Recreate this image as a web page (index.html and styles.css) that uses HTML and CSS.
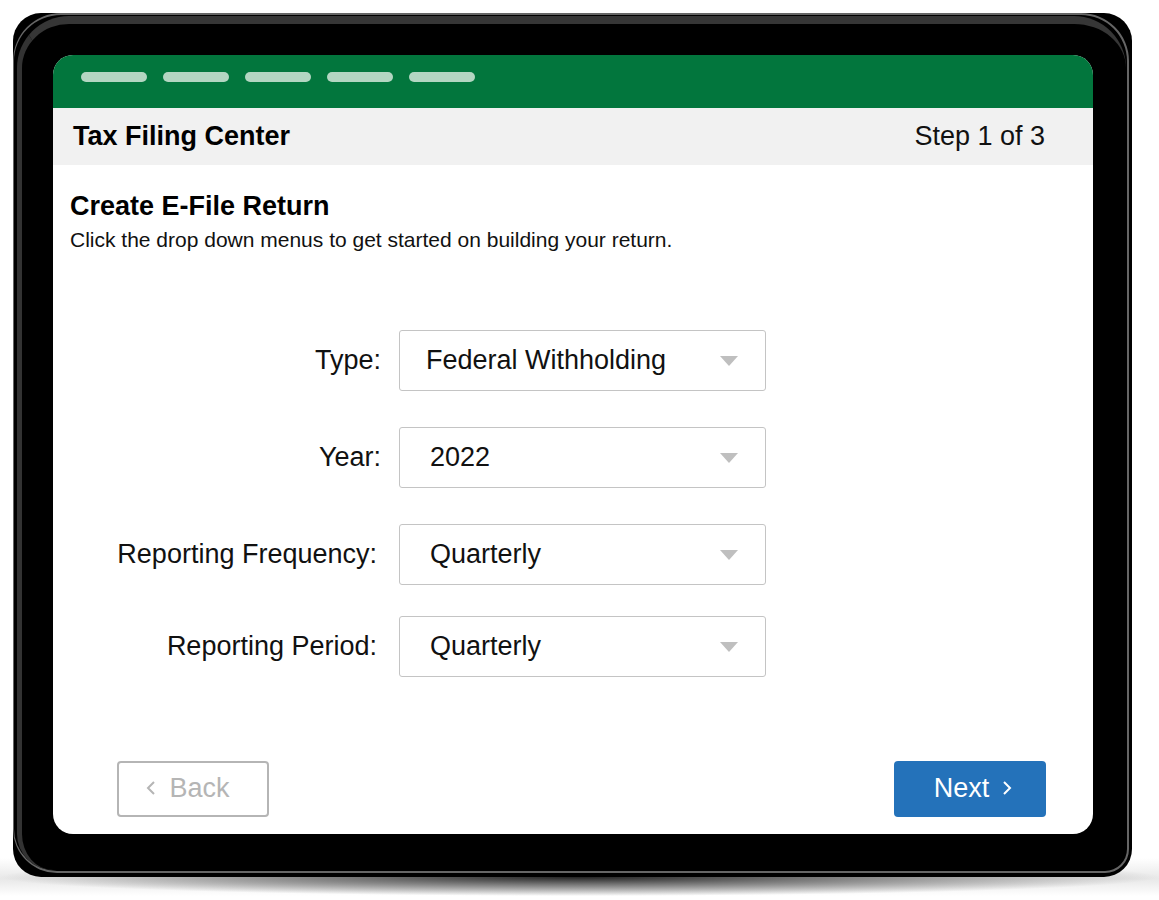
FILE: index.html
```
<!DOCTYPE html>
<html lang="en">

<head>
  <meta charset="utf-8">
  <title>Tax Filing Center</title>
  <link rel="stylesheet" href="styles.css">
</head>

<body>
  <div class="stage">
    <div class="tablet">
      <main class="screen">
        <div class="top-bar">
          <span class="dash"></span>
          <span class="dash"></span>
          <span class="dash"></span>
          <span class="dash"></span>
          <span class="dash"></span>
        </div>

        <header class="title-row">
          <h1>Tax Filing Center</h1>
          <span>Step 1 of 3</span>
        </header>

        <form class="content">
          <h2>Create E-File Return</h2>
          <p class="hint">Click the drop down menus to get started on building your return.</p>

          <div class="fields">
            <div class="field">
              <label for="type">Type:</label>
              <select id="type" class="type-select">
                <option>Federal Withholding</option>
              </select>
            </div>
            <div class="field">
              <label for="year">Year:</label>
              <select id="year">
                <option>2022</option>
              </select>
            </div>
            <div class="field reporting frequency">
              <label for="frequency">Reporting Frequency:</label>
              <select id="frequency">
                <option>Quarterly</option>
              </select>
            </div>
            <div class="field reporting">
              <label for="period">Reporting Period:</label>
              <select id="period">
                <option>Quarterly</option>
              </select>
            </div>
          </div>

          <div class="buttons">
            <button type="button" class="back-button">
              <svg width="10" height="16" viewBox="0 0 10 16" aria-hidden="true"><path d="M8 2L2 8l6 6" /></svg>
              Back
            </button>
            <button type="submit" class="next-button">
              Next
              <svg width="10" height="16" viewBox="0 0 10 16" aria-hidden="true"><path d="M2 2l6 6-6 6" /></svg>
            </button>
          </div>
        </form>
      </main>
    </div>
  </div>
</body>

</html>
```

FILE: styles.css
```
* {
  box-sizing: border-box;
}

body {
  margin: 0;
  background-color: #fff;
  color: #111;
  font-family: "Liberation Sans", Arial, sans-serif;
  font-size: 27px;
  line-height: 32px;
}

.stage {
  position: relative;
  padding: 13px 27px 23px 13px;
}

/* soft floor shadow under the tablet, darkest in the middle */
.stage::after {
  content: "";
  position: absolute;
  z-index: -1;
  left: 0;
  right: 0;
  bottom: 4px;
  height: 38px;
  background:
    radial-gradient(ellipse 50% 50% at 50% 50%, #222, #777 40%, transparent),
    linear-gradient(#fff, #e8e8e8 55%, #fff);
}

.tablet {
  position: relative;
  padding: 42px 39px 43px 40px;
  background-color: #000;
  border-radius: 28px;
}

/* rim highlights */
.tablet::before,
.tablet::after {
  content: "";
  position: absolute;
  pointer-events: none;
}

.tablet::before {
  inset: 0 3px 4px 0;
  border: 2px solid #666;
  border-left-width: 1px;
  border-radius: 48px 48px 24px 44px;
}

.tablet::after {
  inset: 3px 6px 7px 4px;
  border-top: 8px solid #363636;
  border-left: 5px solid #333;
  border-radius: 52px 52px 20px 36px;
}

.screen {
  background-color: #fff;
  border-radius: 20px;
  overflow: hidden;
}

.top-bar {
  display: flex;
  gap: 16px;
  height: 53px;
  padding: 17px 28px;
  background-color: #02763d;
}

.dash {
  width: 66px;
  height: 10px;
  border-radius: 5px;
  background-color: #b3d6c2;
}

.title-row {
  display: flex;
  justify-content: space-between;
  padding: 12px 48px 13px 20px;
  background-color: #f1f1f1;
}

h1,
h2 {
  margin: 0;
  font-size: 27px;
  line-height: 32px;
  color: #000;
}

.content {
  padding: 25px 47px 17px 17px;
}

.hint {
  margin: 0;
  font-size: 21px;
  line-height: 36px;
}

/* drop down rows */
.fields {
  display: grid;
  gap: 36px;
  padding-top: 72px;
}

.field {
  display: grid;
  grid-template-columns: 311px minmax(0, 367px);
  column-gap: 18px;
  align-items: center;
}

.frequency {
  margin-bottom: -5px;
}

label {
  padding-bottom: 2px;
  text-align: right;
}

.reporting label {
  padding-right: 4px;
}

select {
  appearance: none;
  width: 100%;
  height: 61px;
  padding: 0 60px 2px 30px;
  border: 1px solid #c4c4c4;
  border-radius: 3px;
  background: #fff url("data:image/svg+xml,%3Csvg xmlns='http://www.w3.org/2000/svg' width='18' height='10'%3E%3Cpath d='M0 0h18l-9 10z' fill='%23bfbfbf'/%3E%3C/svg%3E") no-repeat right 27px center;
  color: #111;
  font: inherit;
}

.type-select {
  padding-left: 26px;
}

.buttons {
  display: flex;
  justify-content: space-between;
  margin-top: 84px;
  padding-left: 47px;
}

button {
  display: flex;
  align-items: center;
  justify-content: center;
  gap: 13px;
  width: 152px;
  height: 56px;
  border: none;
  border-radius: 4px;
  font: inherit;
  cursor: pointer;
}

button svg {
  fill: none;
  stroke: currentColor;
  stroke-width: 2;
}

.back-button {
  border: 2px solid #b5b5b5;
  background-color: #fff;
  color: #b5b5b5;
  padding: 0 14px 2px 4px;
}

.next-button {
  background-color: #2472ba;
  color: #fff;
  padding: 0 6px 2px 12px;
}
```
